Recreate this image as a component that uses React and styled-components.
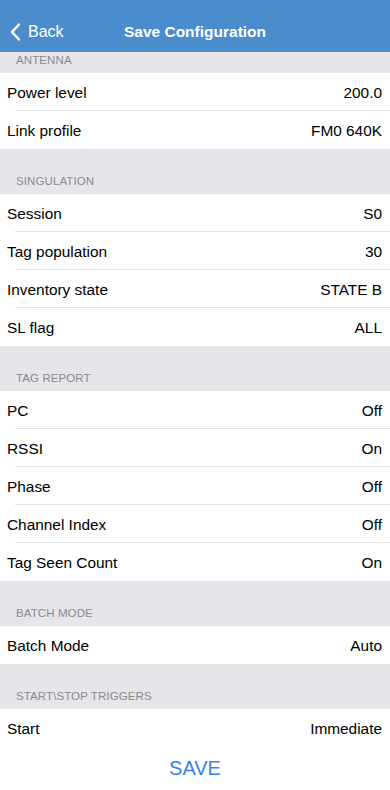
import React from "react";
import styled, { createGlobalStyle } from "styled-components";

const GlobalStyle = createGlobalStyle`
  html, body {
    margin: 0;
    padding: 0;
    background: #fff;
  }
  body {
    font-family: "Liberation Sans", Arial, sans-serif;
    -webkit-font-smoothing: antialiased;
  }
`;

const Screen = styled.div`
  width: 390px;
  height: 790px;
  display: flex;
  flex-direction: column;
  overflow: hidden;
  background: #fff;
`;

const NavBar = styled.header`
  height: 52px;
  flex-shrink: 0;
  background: #4a8ccc;
  display: grid;
  grid-template-columns: 1fr auto 1fr;
  align-items: center;
  padding-top: 12px;
  box-sizing: border-box;
  color: #fff;
`;

const BackButton = styled.button`
  background: none;
  border: 0;
  color: #fff;
  display: flex;
  align-items: center;
  gap: 7px;
  padding: 0 0 0 9px;
  font-family: inherit;
  font-size: 16px;
  justify-self: start;
`;

const Title = styled.h1`
  margin: 0;
  font-size: 15.5px;
  font-weight: 700;
`;

const List = styled.div`
  flex: 1;
  overflow: hidden;
  background: #e5e5ea;
`;

const Scroll = styled.div`
  margin-top: -24px;
`;

const SectionHeader = styled.div`
  height: 45px;
  box-sizing: border-box;
  padding: 0 16px 7px;
  display: flex;
  align-items: flex-end;
  font-size: 11.5px;
  color: #8a8a8e;
  text-transform: uppercase;
  letter-spacing: 0.1px;
`;

const Group = styled.div`
  background: #fff;
`;

const Row = styled.div`
  height: 38px;
  display: flex;
  align-items: center;
  justify-content: space-between;
  padding: 1px 8px 0 7px;
  box-sizing: border-box;
  font-size: 15.4px;
  color: #000;
  position: relative;

  &::after {
    content: "";
    display: ${(p) => (p.$last ? "none" : "block")};
    position: absolute;
    left: 15px;
    right: 0;
    bottom: 0;
    height: 1px;
    background: #e2e2e6;
  }
`;

const Label = styled.span``;

const Value = styled.span``;

const Footer = styled.div`
  height: 44px;
  flex-shrink: 0;
  background: #fff;
  display: flex;
  justify-content: center;
  align-items: flex-start;
`;

const SaveButton = styled.button`
  background: none;
  border: 0;
  color: #3b82e0;
  font-family: inherit;
  font-size: 20px;
  padding: 0;
  margin-top: 11px;
`;

const sections = [
  {
    title: "Antenna",
    rows: [
      ["Power level", "200.0"],
      ["Link profile", "FM0 640K"],
    ],
  },
  {
    title: "Singulation",
    rows: [
      ["Session", "S0"],
      ["Tag population", "30"],
      ["Inventory state", "STATE B"],
      ["SL flag", "ALL"],
    ],
  },
  {
    title: "Tag Report",
    rows: [
      ["PC", "Off"],
      ["RSSI", "On"],
      ["Phase", "Off"],
      ["Channel Index", "Off"],
      ["Tag Seen Count", "On"],
    ],
  },
  {
    title: "Batch Mode",
    rows: [["Batch Mode", "Auto"]],
  },
  {
    title: "Start\\Stop Triggers",
    rows: [["Start", "Immediate"]],
  },
];

const Chevron = () => (
  <svg width="12" height="20" viewBox="0 0 12 20" fill="none">
    <path
      d="M10 2.5 L3 10 L10 17.5"
      stroke="#fff"
      strokeWidth="2.4"
      strokeLinecap="round"
      strokeLinejoin="round"
    />
  </svg>
);

const App = () => {
  return (
    <Screen>
      <GlobalStyle />
      <NavBar>
        <BackButton>
          <Chevron />
          Back
        </BackButton>
        <Title>Save Configuration</Title>
        <span />
      </NavBar>
      <List>
        <Scroll>
          {sections.map((s) => (
            <React.Fragment key={s.title}>
              <SectionHeader>{s.title}</SectionHeader>
              <Group>
                {s.rows.map(([label, value], i) => (
                  <Row key={label} $last={i === s.rows.length - 1}>
                    <Label>{label}</Label>
                    <Value>{value}</Value>
                  </Row>
                ))}
              </Group>
            </React.Fragment>
          ))}
        </Scroll>
      </List>
      <Footer>
        <SaveButton>SAVE</SaveButton>
      </Footer>
    </Screen>
  );
};

export default App;
